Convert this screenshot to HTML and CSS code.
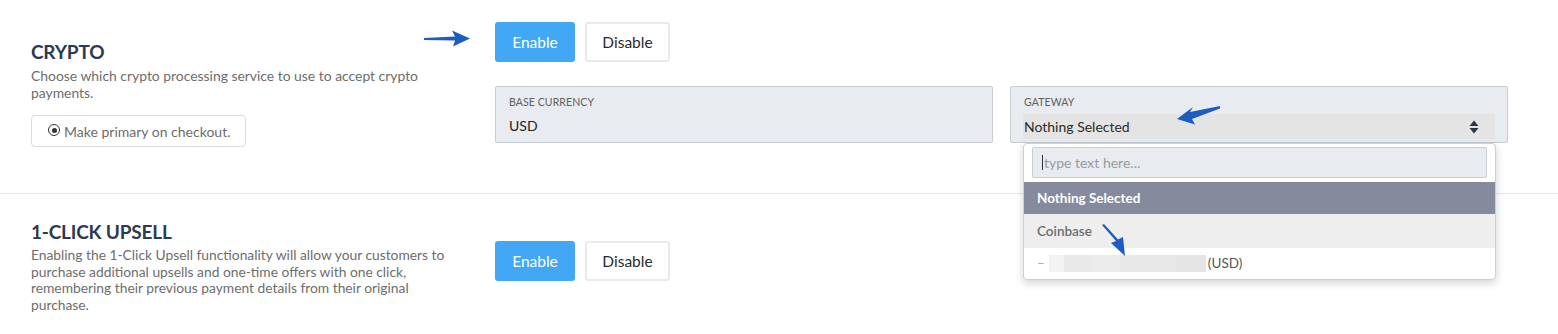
FILE: index.html
```html
<!DOCTYPE html>
<html>
<head>
<meta charset="utf-8">
<link rel="stylesheet" href="styles.css">
</head>
<body>
<div class="page">
  <section class="row row-crypto">
    <div class="info">
      <h2 class="title">CRYPTO</h2>
      <p class="desc">Choose which crypto processing service to use to accept crypto payments.</p>
      <label class="primary"><span class="radio"><span class="dot"></span></span>Make primary on checkout.</label>
    </div>
    <div class="controls">
      <div class="toggle">
        <button class="btn btn-on">Enable</button>
        <button class="btn btn-off">Disable</button>
      </div>
      <div class="fields">
        <div class="field">
          <div class="label">BASE CURRENCY</div>
          <div class="value">USD</div>
        </div>
        <div class="field field-gateway">
          <div class="label">GATEWAY</div>
          <div class="select">
            <span>Nothing Selected</span>
            <svg class="caret" width="10" height="14" viewBox="0 0 10 14"><path d="M5 0.5 L9.5 6 H0.5 Z M5 13.5 L9.5 8 H0.5 Z" fill="#2b3648"/></svg>
          </div>
          <div class="menu">
            <div class="search"><span class="cursor"></span><span class="ph">type text here...</span></div>
            <div class="opt opt-active">Nothing Selected</div>
            <div class="opt opt-group">Coinbase</div>
            <div class="opt opt-item"><span class="dash">–</span><span class="redact"><i class="r1"></i><i class="r2"></i><i class="r3"></i><i class="r4"></i><i class="r5"></i></span><span class="cur">(USD)</span></div>
          </div>
        </div>
      </div>
    </div>
  </section>
  <section class="row row-upsell">
    <div class="info">
      <h2 class="title">1-CLICK UPSELL</h2>
      <p class="desc">Enabling the 1-Click Upsell functionality will allow your customers to purchase additional upsells and one-time offers with one click, remembering their previous payment details from their original purchase.</p>
    </div>
    <div class="controls">
      <div class="toggle">
        <button class="btn btn-on">Enable</button>
        <button class="btn btn-off">Disable</button>
      </div>
    </div>
  </section>

  <svg class="arrow a1" width="52" height="20" viewBox="0 0 52 20"><path d="M2 9 L33 7.5 L30 1.5 L48 9.5 L31 17.5 L33 11.5 L2 11 Z" fill="#1d5cc0"/></svg>
  <svg class="arrow a2" width="46" height="22" viewBox="0 0 46 22"><path d="M44 2 L14 8 L17 3 L1 15 L19 20.5 L16 15 L44 4.5 Z" fill="#1d5cc0"/></svg>
  <svg class="arrow a3" width="26" height="34" viewBox="0 0 26 34"><path d="M1 1 L15 17 L10 19 L24 32 L22 13 L17 15.5 L3 0 Z" fill="#1d5cc0"/></svg>
</div>
</body>
</html>
```

FILE: styles.css
```css
* { box-sizing: border-box; }
html, body { margin: 0; padding: 0; background: #fff; }
body {
  font-family: Lato, "Open Sans", Arial, sans-serif;
  color: #333;
  width: 1558px;
  height: 334px;
  overflow: hidden;
}
.page { position: relative; }
.row {
  display: flex;
  padding-left: 31px;
}
.row-crypto {
  padding-top: 22px;
  height: 194px;
  border-bottom: 1px solid #e6e6e6;
}
.row-upsell { padding-top: 47px; }
.info { width: 464px; flex: none; }
.row-crypto .info { padding-top: 19px; }
.row-upsell .info { margin-top: -20px; }
.title {
  margin: 0;
  font-size: 19px;
  line-height: 22px;
  font-weight: 700;
  color: #2c3a52;
  letter-spacing: -0.2px;
}
.desc {
  margin: 5px 0 0;
  width: 425px;
  font-size: 13.9px;
  line-height: 16.6px;
  color: #6d6d6d;
}
.row-upsell .desc { margin-top: 4px; font-size: 13.8px; }
.primary {
  margin-top: 14px;
  display: inline-flex;
  align-items: center;
  height: 32px;
  width: 215px;
  padding: 0 0 0 16px;
  border: 1px solid #dcdcdc;
  border-radius: 4px;
  font-size: 14px;
  color: #6d6d6d;
}
.radio {
  width: 12px; height: 12px;
  border: 1.5px solid #333;
  border-radius: 50%;
  display: inline-flex;
  align-items: center;
  justify-content: center;
  margin-right: 4px;
  position: relative;
  top: -1px;
}
.dot { width: 5px; height: 5px; border-radius: 50%; background: #333; }
.controls { flex: none; width: 1013px; }
.toggle { display: flex; gap: 10px; }
.btn {
  height: 40px;
  font-family: inherit;
  font-size: 15.5px;
  padding: 0;
  cursor: pointer;
}
.btn-on {
  width: 80px;
  background: #42a8f5;
  color: #fff;
  border: none;
  border-radius: 3px;
}
.btn-off {
  width: 85px;
  background: #fff;
  color: #2b2b2b;
  border: 2px solid #eaeaea;
  border-radius: 3px;
}
.fields {
  margin-top: 24px;
  display: grid;
  grid-template-columns: 498px 498px;
  column-gap: 17px;
}
.field {
  position: relative;
  height: 57px;
  background: #e8ecf0;
  border: 1px solid #c8cdd3;
  border-radius: 2px;
  padding: 8px 13px 0 13px;
}
.label {
  font-size: 10.5px;
  line-height: 14px;
  color: #5f5f5f;
  letter-spacing: 0.1px;
}
.value {
  margin-top: 8px;
  font-size: 14px;
  line-height: 18px;
  color: #222;
}
.select {
  margin-top: 5px;
  margin-left: -1px;
  margin-right: -1px;
  height: 25px;
  background: #e4e4e4;
  display: flex;
  align-items: center;
  justify-content: space-between;
  padding: 0 16px 0 1px;
  font-size: 14px;
  color: #2b2b2b;
}
.caret { display: block; }
.menu {
  position: absolute;
  left: 12px;
  top: 56px;
  width: 473px;
  height: 137px;
  background: #fff;
  border: 1px solid #cfcfcf;
  border-radius: 4px;
  box-shadow: 0 3px 8px rgba(0,0,0,0.18);
  padding-top: 3px;
  z-index: 2;
}
.search {
  margin: 0 8px 4px 8px;
  height: 31px;
  background: #e8ecf0;
  border: 1px solid #c8cdd3;
  border-radius: 2px;
  display: flex;
  align-items: center;
  padding-left: 9px;
  font-size: 14px;
  color: #9a9a9a;
}
.cursor { width: 1px; height: 15px; background: #333; margin-right: 1px; }
.opt {
  display: flex;
  align-items: center;
  padding-left: 13px;
  font-size: 13.5px;
}
.opt-active {
  height: 32px;
  background: #858b9c;
  color: #fff;
  font-weight: 700;
}
.opt-group {
  height: 34px;
  background: #eeeeee;
  color: #6d6d6d;
  font-weight: 600;
}
.opt-item {
  height: 30px;
  color: #555;
  font-size: 13.5px;
}
.dash { color: #aaa; margin-right: 4px; }
.redact { display: flex; height: 17px; margin-right: 2px; }
.redact i { display: block; height: 17px; }
.r1 { width: 15px; background: #f3f3f3; }
.r2 { width: 28px; background: #e9e9e9; }
.r3 { width: 28px; background: #ebebeb; }
.r4 { width: 56px; background: #e8e8e8; }
.r5 { width: 30px; background: #e5e5e5; }
.cur { color: #555; }
.arrow { position: absolute; z-index: 5; }
.a1 { left: 422px; top: 29px; }
.a2 { left: 1176px; top: 104px; }
.a3 { left: 1101px; top: 224px; }
```
